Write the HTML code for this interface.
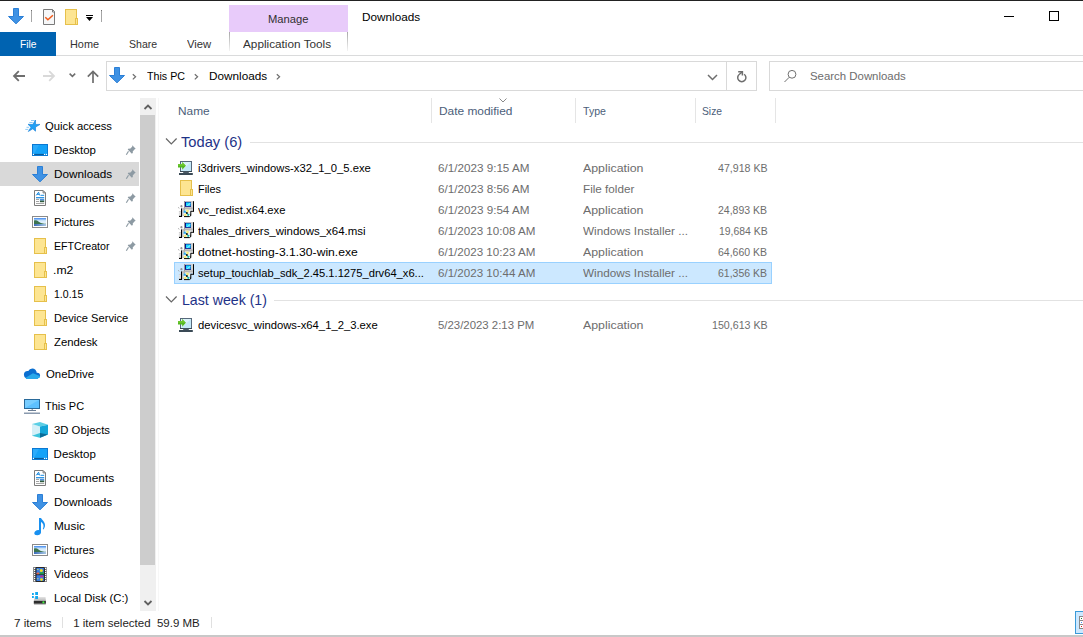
<!DOCTYPE html>
<html><head><meta charset="utf-8">
<style>
*{margin:0;padding:0;box-sizing:border-box}
html,body{width:1083px;height:637px;overflow:hidden;background:#fff}
body{position:relative;font-family:"Liberation Sans",sans-serif;font-size:12px;color:#000}
.a{position:absolute}
.t{position:absolute;white-space:nowrap;transform-origin:0 0}
</style></head><body>
<!-- top dark border -->
<div class="a" style="left:0;top:0;width:1083px;height:1px;background:#222"></div>
<!-- Manage contextual tab -->
<div class="a" style="left:229px;top:5px;width:119px;height:27px;background:#e8cbfa"></div>
<!-- ribbon -->
<div class="a" style="left:0;top:55px;width:1083px;height:1px;background:#dadbdc"></div>
<div class="a" style="left:0;top:32px;width:56px;height:24px;background:#0063b1"></div>
<div class="a" style="left:229px;top:32px;width:1px;height:19px;background:linear-gradient(#a8a8a8,#f4f4f4)"></div>
<div class="a" style="left:347px;top:32px;width:1px;height:19px;background:linear-gradient(#a8a8a8,#f4f4f4)"></div>
<!-- window controls -->
<div class="a" style="left:1004px;top:16px;width:10px;height:1px;background:#000"></div>
<div class="a" style="left:1049px;top:11px;width:10px;height:10px;border:1px solid #000"></div>
<!-- address bar -->
<div class="a" style="left:106px;top:61px;width:651px;height:30px;border:1px solid #d9d9d9"></div>
<div class="a" style="left:726px;top:61px;width:1px;height:30px;background:#d9d9d9"></div>
<!-- search box -->
<div class="a" style="left:769px;top:61px;width:320px;height:30px;border:1px solid #d9d9d9"></div>
<!-- nav selection -->
<div class="a" style="left:0;top:162px;width:139px;height:24px;background:#d9d9d9"></div>
<!-- scrollbar -->
<div class="a" style="left:140px;top:98px;width:16px;height:513px;background:#f0f0f0"></div>
<div class="a" style="left:140px;top:115px;width:15px;height:450px;background:#cdcdcd"></div>
<div class="a" style="left:158px;top:98px;width:1px;height:513px;background:#f7f7f7"></div>
<!-- column separators -->
<div class="a" style="left:431px;top:98px;width:1px;height:25px;background:#e5e5e5"></div>
<div class="a" style="left:575px;top:98px;width:1px;height:25px;background:#e5e5e5"></div>
<div class="a" style="left:695px;top:98px;width:1px;height:25px;background:#e5e5e5"></div>
<div class="a" style="left:775px;top:98px;width:1px;height:25px;background:#e5e5e5"></div>
<!-- group lines -->
<div class="a" style="left:250px;top:142px;width:833px;height:1px;background:#e2e2e2"></div>
<div class="a" style="left:274px;top:300px;width:809px;height:1px;background:#e2e2e2"></div>
<!-- selected row -->
<div class="a" style="left:174px;top:262px;width:598px;height:22px;background:#cce8ff;border:1px solid #99d1ff"></div>
<!-- status bar -->
<div class="a" style="left:62px;top:617px;width:1px;height:11px;background:#e0e0e0"></div>
<div class="a" style="left:211px;top:617px;width:1px;height:11px;background:#e0e0e0"></div>
<div class="a" style="left:1075px;top:611px;width:10px;height:23px;background:#cce8ff;border:1px solid #3a9ad9"></div>
<div class="a" style="left:0;top:635px;width:1083px;height:2px;background:#c8c8c8"></div>
<svg class="a" style="left:0;top:0" width="1083" height="637" viewBox="0 0 1083 637">
<defs>
  <symbol id="dl" overflow="visible"><path d="M5.5 0.5h5v8h5l-7.5 7.3l-7.5-7.3h5z" fill="#3f92e4" stroke="#2b7fd6" stroke-width="1"/></symbol>
  <symbol id="fold" overflow="visible"><rect x="0.5" y="0.5" width="11" height="15" fill="#fde592" stroke="#e6c04b"/><rect x="10.5" y="9.5" width="2" height="6" fill="#fde592" stroke="#e6c04b"/></symbol>
  <symbol id="pin" overflow="visible"><path d="M6.3 0.3l3.4 3.4l-1 0.6l-2 2.1l0.2 1.4l-1 1l-4.2-4.2l1-1l1.4 0.2l2.1-2z" fill="#8d9aa3"/><path d="M2.5 6.2l-2.2 3.5" stroke="#8d9aa3" stroke-width="1.2"/></symbol>
  <symbol id="desk" overflow="visible"><rect x="0.5" y="0.5" width="15" height="11" fill="#14a2f8" stroke="#0b78d2"/><path d="M1 1h6L2 10H1z" fill="#40b4ff" opacity="0.5"/><rect x="2" y="9.9" width="11" height="1.1" fill="#0a5a9a"/><circle cx="1.5" cy="10.4" r="0.65" fill="#fff"/><circle cx="12.5" cy="10.4" r="0.65" fill="#fff"/><circle cx="14.5" cy="10.4" r="0.65" fill="#fff"/></symbol>
  <symbol id="docs" overflow="visible"><path d="M0.5 0.5h8.5l2.5 2.5v12.5h-11z" fill="#fff" stroke="#7c7c7c"/><path d="M9 0.5v2.5h2.5z" fill="#c8c8c8" stroke="#7c7c7c" stroke-width="0.8"/><path d="M2.2 5.4L4.6 2.2L5.6 5.4M3 4.3h2.2" fill="none" stroke="#1a8ae0" stroke-width="1"/><rect x="6.5" y="4.8" width="3.7" height="1" fill="#1a8ae0"/><rect x="2" y="7.1" width="8.2" height="1.2" fill="#1a8ae0"/><rect x="2" y="9" width="3" height="0.9" fill="#9a9a9a"/><rect x="2" y="11.1" width="3" height="0.9" fill="#9a9a9a"/><rect x="5.9" y="8.9" width="4.3" height="1.7" fill="#4a90e0"/><rect x="5.9" y="10.6" width="4.3" height="1.6" fill="#2e5a3a"/><rect x="2" y="13" width="8.2" height="1" fill="#a8a8a8"/></symbol>
  <symbol id="pics" overflow="visible"><defs><linearGradient id="psky" x1="0" y1="0" x2="0" y2="1"><stop offset="0" stop-color="#3c86ee"/><stop offset="0.45" stop-color="#d4eafa"/><stop offset="1" stop-color="#e8f4fc"/></linearGradient><linearGradient id="pwat" x1="0" y1="0" x2="1" y2="0"><stop offset="0" stop-color="#3a6ab8"/><stop offset="1" stop-color="#a8c8e4"/></linearGradient></defs><rect x="0.5" y="0.5" width="15" height="11" fill="#fff" stroke="#8a8a8a"/><rect x="2" y="2" width="12" height="6" fill="url(#psky)"/><path d="M2 4.6c1.5-0.6 3-0.3 4.5 0.8s3 2 7.5 2.3V8.2H2z" fill="#3c7450"/><rect x="2" y="8" width="12" height="2" fill="url(#pwat)"/></symbol>
  <symbol id="exe" overflow="visible"><rect x="2.5" y="0.5" width="11" height="10" fill="#c4e8f8" stroke="#56687a"/><path d="M3 1h10L3 10z" fill="#e6f6fc" opacity="0.7"/><rect x="2" y="10" width="12" height="1" fill="#3a4a56"/><rect x="5.2" y="10.5" width="5.6" height="1.5" fill="#4a5a66"/><rect x="1" y="12" width="13.8" height="2" fill="#3a4a56"/><path d="M0 3h4.2V1l3.7 3.8l-3.7 4V6.5H0z" fill="#52b820"/><path d="M0 3h4.2V1l3.7 3.8H0z" fill="#7ed038" opacity="0.6"/></symbol>
  <symbol id="msi" overflow="visible"><rect x="6" y="0" width="9.2" height="9" fill="#d0d0d0"/><rect x="6" y="0" width="0.8" height="9" fill="#8a8a8a"/><rect x="15" y="0.2" width="1" height="10.2" fill="#000"/><rect x="7" y="0.9" width="6" height="4.9" fill="#000080"/><rect x="7.9" y="1.4" width="4.7" height="3.7" fill="#18d8ff"/><path d="M8.3 4.9L12.4 1.6v1.3L9.6 4.9z" fill="#8ae8ff"/><rect x="6.8" y="6.6" width="8" height="1.2" fill="#b0b0b0"/><path d="M12.4 9.8h3.6v0.9h-2.7v3.8l-1.2 1.2v-1z" fill="#000"/><rect x="0.9" y="10" width="2.2" height="5" fill="#d0d0d0"/><rect x="0.9" y="11.5" width="2.2" height="0.8" fill="#f4f4f4"/><rect x="0.9" y="13.5" width="2.2" height="0.8" fill="#f4f4f4"/><rect x="3" y="7.4" width="1.1" height="8.4" fill="#000"/><rect x="1" y="14.9" width="3" height="1.1" fill="#000"/><rect x="4.1" y="6.8" width="2.4" height="8.2" fill="#c0c0c0"/><circle cx="8.7" cy="12" r="3.4" fill="#eeeeee"/><path d="M8.7 12L5.3 11.6a3.4 3.4 0 0 1 1.6-2.5z" fill="#28a8e8"/><path d="M8.7 12L8.3 8.6a3.4 3.4 0 0 1 2.9 1.3z" fill="#f8f070"/><path d="M8.7 12l3 1.5a3.4 3.4 0 0 1-1.8 1.7z" fill="#10b8b0"/><path d="M8.7 12L8.1 15.4a3.4 3.4 0 0 1-2.5-1.7z" fill="#f8f070"/><rect x="8" y="11.2" width="1.7" height="1.6" fill="#000"/><rect x="6" y="15.1" width="5.8" height="1" fill="#000"/><path d="M2.2 5.2h2.4 M3.4 4v2.4" stroke="#8a8a8a" stroke-width="0.9"/><path d="M0 6.3l1.4 1" stroke="#a0a0a0" stroke-width="0.8"/></symbol>
</defs>

<!-- QAT -->
<use href="#dl" x="8" y="8"/>
<rect x="31" y="10" width="1" height="12" fill="#a6a6a6"/><rect x="31" y="10" width="1" height="1" fill="#707070"/>
<path d="M43.5 9.5h9l2 2v13h-11z" fill="#f6f7f8" stroke="#7a7a7a"/>
<path d="M52.5 9.5v2.5h2" fill="none" stroke="#7a7a7a"/>
<path d="M45.3 17.2l2.6 2.6l5-4.6" fill="none" stroke="#f05a1a" stroke-width="1.5"/>
<use href="#fold" x="65" y="9"/>
<rect x="86" y="15" width="7" height="1" fill="#000"/>
<path d="M86 17h7l-3.5 4z" fill="#000"/>
<rect x="101" y="10" width="1" height="12" fill="#a6a6a6"/><rect x="101" y="10" width="1" height="1" fill="#707070"/>

<!-- nav buttons -->
<g fill="none" stroke-width="1.5">
  <path d="M25 76H14.2 M18.8 71.2L14 76L18.8 80.8" stroke="#6e6e6e" stroke-width="1.8"/>
  <path d="M43 76H53.8 M49.2 71.2L54 76L49.2 80.8" stroke="#d9d9d9" stroke-width="1.8"/>
  <path d="M69.6 73.6L72.4 76.4L75.2 73.6" stroke="#6e6e6e"/>
  <path d="M93 83V71.5 M87.8 76.7L93 71.5L98.2 76.7" stroke="#6e6e6e" stroke-width="1.7"/>
</g>
<use href="#dl" x="109" y="67"/>
<g fill="none" stroke="#6e6e6e" stroke-width="1.2">
  <path d="M132.8 74.2L135.6 76.8L132.8 79.4"/>
  <path d="M194.8 74.2L197.6 76.8L194.8 79.4"/>
  <path d="M276.8 74.2L279.6 76.8L276.8 79.4"/>
</g>
<path d="M708 75l4.5 4.5l4.5-4.5" fill="none" stroke="#6e6e6e" stroke-width="1.5"/>
<path d="M744.15 74.24A4.1 4.1 0 1 1 739.45 74.24L742.2 71.9" fill="none" stroke="#6e6e6e" stroke-width="1.5"/>
<path d="M738.2 71.8H742.4V75.5" fill="none" stroke="#6e6e6e" stroke-width="1.5"/>
<circle cx="792" cy="74.3" r="3.9" fill="none" stroke="#707070" stroke-width="1"/>
<path d="M789.2 77.3L784.5 82" stroke="#707070" stroke-width="1"/>

<!-- scrollbar arrows -->
<path d="M144.5 109L148 105.5L151.5 109" fill="none" stroke="#606060" stroke-width="1.8"/>
<path d="M144.5 601L148 604.5L151.5 601" fill="none" stroke="#606060" stroke-width="1.8"/>

<!-- sort arrow -->
<path d="M499.5 98.5L503 102L506.5 98.5" fill="none" stroke="#8a8a8a" stroke-width="1"/>
<!-- group chevrons -->
<path d="M166 138.5L171.3 143.8L176.6 138.5" fill="none" stroke="#666" stroke-width="1.2"/>
<path d="M166 296.5L171.3 301.8L176.6 296.5" fill="none" stroke="#666" stroke-width="1.2"/>

<!-- NAV ICONS -->
<!-- star -->
<polygon points="35.5,120 35.56,124.47 40,124.4 35.56,127.11 35.5,131.2 32.8,128.79 28.3,131.5 31.03,127.16 28,124.3 32.73,124.45" fill="#20a0f4" stroke="#0b7bd6" stroke-width="0.6" stroke-linejoin="round"/>
<g stroke="#8fcaf4" stroke-width="1">
  <path d="M31 120.5h4 M29.3 122.5h3.4 M26.5 127.3h2.6 M25.3 129.4h3"/>
</g>
<use href="#desk" x="32" y="144"/>
<use href="#dl" x="32" y="166"/>
<use href="#docs" x="34" y="190"/>
<use href="#pics" x="32" y="216"/>
<use href="#fold" x="34" y="238"/>
<use href="#fold" x="34" y="262"/>
<use href="#fold" x="34" y="286"/>
<use href="#fold" x="34" y="310"/>
<use href="#fold" x="34" y="334"/>
<use href="#pin" x="126" y="145"/>
<use href="#pin" x="126" y="169"/>
<use href="#pin" x="126" y="193"/>
<use href="#pin" x="126" y="217"/>
<use href="#pin" x="126" y="241"/>
<!-- cloud -->
<clipPath id="cl"><circle cx="32.3" cy="372.8" r="4.4"/><circle cx="27.7" cy="374.8" r="3.8"/><circle cx="37.2" cy="375.6" r="2.9"/><rect x="26" y="375" width="11.5" height="4"/></clipPath>
<g clip-path="url(#cl)"><rect x="23" y="367" width="18" height="13" fill="#0b6fd0"/><path d="M22 380L33 373.2L41 376.5V380z" fill="#28a8ea"/></g>
<!-- PC -->
<rect x="24.5" y="399.5" width="15" height="9" fill="#5cc0ff" stroke="#2a6a9a"/>
<path d="M25 400h14L25 408z" fill="#8ad6ff" opacity="0.6"/>
<rect x="31.5" y="409" width="1.5" height="1" fill="#9aa8b6"/>
<rect x="28" y="410" width="8" height="1" fill="#6a7d94"/>
<rect x="24" y="412.5" width="16" height="1.5" fill="#8a9aae"/>
<!-- cube -->
<polygon points="32,424 40,426.5 40,437.8 32,435.7" fill="#d4f0f8"/>
<polygon points="32,424 40,422 48,424.8 40,426.5" fill="#5ccfe5"/>
<polygon points="40,426.5 48,424.8 48,434.6 40,437.8" fill="#14a6d8"/>
<polygon points="32,435.7 40,433 40,437.8" fill="#3dc4dc"/>
<polygon points="40,433 48,434.6 40,437.8" fill="#0b6c98"/>
<use href="#desk" x="32" y="448"/>
<use href="#docs" x="34" y="470"/>
<use href="#dl" x="32" y="494"/>
<!-- music -->
<path d="M39 518h2c0.5 1.5 4 3.5 4 7c0 2-0.7 3.5-1.6 4.4l-0.6-0.4c0.5-1 0.7-2 0.7-3c0-2-1.5-3.5-2.5-4v10.5c0 1.3-1.8 2.8-3.8 2.8s-2.9-0.8-2.9-2c0-1.8 2-3.2 3.9-3.2c0.3 0 0.6 0 0.8 0.1z" fill="#1890f0"/>
<use href="#pics" x="32" y="544"/>
<!-- videos -->
<rect x="33.5" y="567.5" width="13" height="14" fill="#5a5a5a" stroke="#8a8a8a"/>
<rect x="35.6" y="567.2" width="9" height="14.6" fill="#111"/>
<rect x="36.4" y="568" width="7.4" height="6.3" fill="#3d7ee0"/>
<rect x="36.4" y="575.2" width="7.4" height="5.8" fill="#3d7ee0"/>
<circle cx="41.3" cy="570.6" r="1.5" fill="#f4e020"/><rect x="39.5" y="572.3" width="4.3" height="2" fill="#20a040"/><rect x="36.6" y="572.6" width="2.6" height="1.7" fill="#f06040"/><rect x="37" y="569" width="1.6" height="0.8" fill="#c8e870"/>
<circle cx="41.5" cy="579.6" r="1.4" fill="#f4e020"/><rect x="40.2" y="575.6" width="3" height="1.6" fill="#c02890"/><rect x="37" y="578.4" width="1.6" height="0.8" fill="#c8e870"/>
<g fill="#fff"><rect x="34" y="568" width="1.2" height="1.1"/><rect x="34" y="570" width="1.2" height="1.1"/><rect x="34" y="572" width="1.2" height="1.1"/><rect x="34" y="574" width="1.2" height="1.1"/><rect x="34" y="576" width="1.2" height="1.1"/><rect x="34" y="578" width="1.2" height="1.1"/><rect x="34" y="580" width="1.2" height="1.1"/>
<rect x="45" y="568" width="1.2" height="1.1"/><rect x="45" y="570" width="1.2" height="1.1"/><rect x="45" y="572" width="1.2" height="1.1"/><rect x="45" y="574" width="1.2" height="1.1"/><rect x="45" y="576" width="1.2" height="1.1"/><rect x="45" y="578" width="1.2" height="1.1"/><rect x="45" y="580" width="1.2" height="1.1"/></g>
<!-- disk -->
<defs><linearGradient id="dtop" x1="0" y1="0" x2="0" y2="1"><stop offset="0" stop-color="#e4e4e4"/><stop offset="1" stop-color="#b8b8b8"/></linearGradient></defs>
<path d="M34.5 597h11l0.5 3.8h-12z" fill="url(#dtop)"/>
<rect x="33.8" y="600.8" width="12.1" height="3" fill="#2e2e2e"/>
<rect x="34" y="603.8" width="11.8" height="0.8" fill="#a0a0a0"/>
<circle cx="43.4" cy="602.3" r="1.1" fill="#40f040"/>
<g fill="#12a8f0"><rect x="32" y="593" width="1.8" height="2"/><rect x="35.2" y="592" width="2.8" height="3"/><rect x="32" y="596" width="1.8" height="2"/><rect x="35.2" y="596" width="2.8" height="3"/></g>

<!-- FILE ICONS -->
<use href="#exe" x="178" y="161"/>
<use href="#fold" x="180" y="180"/>
<use href="#msi" x="178" y="201"/>
<use href="#msi" x="178" y="222"/>
<use href="#msi" x="178" y="243"/>
<use href="#msi" x="178" y="264"/>
<use href="#exe" x="178" y="318"/>
<!-- status view button icon -->
<rect x="1079.5" y="616.5" width="6" height="12" fill="#fff" stroke="#888"/><path d="M1080 620.5h5M1080 624.5h5" stroke="#888"/><rect x="1081" y="618" width="1" height="1" fill="#2a7a3a"/><rect x="1081" y="622" width="1" height="1" fill="#4a8aff"/><rect x="1081" y="626" width="1" height="1" fill="#e02020"/>
</svg>

<div class="t" style="left:267.50px;top:14.00px;font-size:11.5px;line-height:11.5px;color:#303030;transform:scaleX(0.9738)">Manage</div>
<div class="t" style="left:361.50px;top:12.00px;font-size:11.5px;line-height:11.5px;color:#000;transform:scaleX(1.0228)">Downloads</div>
<div class="t" style="left:19.80px;top:39.00px;font-size:11.5px;line-height:11.5px;color:#fff;transform:scaleX(0.8947)">File</div>
<div class="t" style="left:70.30px;top:39.00px;font-size:11.5px;line-height:11.5px;color:#333;transform:scaleX(0.9452)">Home</div>
<div class="t" style="left:129.40px;top:39.00px;font-size:11.5px;line-height:11.5px;color:#333;transform:scaleX(0.9161)">Share</div>
<div class="t" style="left:187.30px;top:39.00px;font-size:11.5px;line-height:11.5px;color:#333;transform:scaleX(0.9800)">View</div>
<div class="t" style="left:243.20px;top:39.00px;font-size:11.5px;line-height:11.5px;color:#333;transform:scaleX(1.0233)">Application Tools</div>
<div class="t" style="left:146.50px;top:71.00px;font-size:11.5px;line-height:11.5px;color:#000;transform:scaleX(0.9293)">This PC</div>
<div class="t" style="left:208.60px;top:71.00px;font-size:11.5px;line-height:11.5px;color:#000;transform:scaleX(1.0211)">Downloads</div>
<div class="t" style="left:810.30px;top:71.00px;font-size:11.5px;line-height:11.5px;color:#6d6d6d;transform:scaleX(0.9918)">Search Downloads</div>
<div class="t" style="left:45.20px;top:121.00px;font-size:11.5px;line-height:11.5px;color:#000;transform:scaleX(0.9783)">Quick access</div>
<div class="t" style="left:53.60px;top:145.00px;font-size:11.5px;line-height:11.5px;color:#000;transform:scaleX(0.9952)">Desktop</div>
<div class="t" style="left:53.60px;top:169.00px;font-size:11.5px;line-height:11.5px;color:#000;transform:scaleX(1.0211)">Downloads</div>
<div class="t" style="left:53.60px;top:193.00px;font-size:11.5px;line-height:11.5px;color:#000;transform:scaleX(1.0379)">Documents</div>
<div class="t" style="left:53.60px;top:217.00px;font-size:11.5px;line-height:11.5px;color:#000;transform:scaleX(0.9738)">Pictures</div>
<div class="t" style="left:53.60px;top:241.00px;font-size:11.5px;line-height:11.5px;color:#000;transform:scaleX(0.9233)">EFTCreator</div>
<div class="t" style="left:52.54px;top:265.00px;font-size:11.5px;line-height:11.5px;color:#000;transform:scaleX(1.0611)">.m2</div>
<div class="t" style="left:53.60px;top:289.00px;font-size:11.5px;line-height:11.5px;color:#000;transform:scaleX(0.9156)">1.0.15</div>
<div class="t" style="left:53.60px;top:313.00px;font-size:11.5px;line-height:11.5px;color:#000;transform:scaleX(0.9675)">Device Service</div>
<div class="t" style="left:53.60px;top:337.00px;font-size:11.5px;line-height:11.5px;color:#000;transform:scaleX(0.9864)">Zendesk</div>
<div class="t" style="left:45.50px;top:369.00px;font-size:11.5px;line-height:11.5px;color:#000;transform:scaleX(0.9898)">OneDrive</div>
<div class="t" style="left:45.00px;top:401.00px;font-size:11.5px;line-height:11.5px;color:#000;transform:scaleX(0.9561)">This PC</div>
<div class="t" style="left:53.60px;top:425.00px;font-size:11.5px;line-height:11.5px;color:#000;transform:scaleX(0.9842)">3D Objects</div>
<div class="t" style="left:53.60px;top:449.00px;font-size:11.5px;line-height:11.5px;color:#000;transform:scaleX(1.0000)">Desktop</div>
<div class="t" style="left:53.60px;top:473.00px;font-size:11.5px;line-height:11.5px;color:#000;transform:scaleX(1.0345)">Documents</div>
<div class="t" style="left:53.60px;top:497.00px;font-size:11.5px;line-height:11.5px;color:#000;transform:scaleX(1.0211)">Downloads</div>
<div class="t" style="left:53.60px;top:521.00px;font-size:11.5px;line-height:11.5px;color:#000;transform:scaleX(1.0300)">Music</div>
<div class="t" style="left:53.60px;top:545.00px;font-size:11.5px;line-height:11.5px;color:#000;transform:scaleX(0.9714)">Pictures</div>
<div class="t" style="left:53.60px;top:569.00px;font-size:11.5px;line-height:11.5px;color:#000;transform:scaleX(0.9829)">Videos</div>
<div class="t" style="left:53.60px;top:593.00px;font-size:11.5px;line-height:11.5px;color:#000;transform:scaleX(0.9867)">Local Disk (C:)</div>
<div class="t" style="left:177.50px;top:106.00px;font-size:11.5px;line-height:11.5px;color:#4c607a;transform:scaleX(1.0290)">Name</div>
<div class="t" style="left:438.90px;top:106.00px;font-size:11.5px;line-height:11.5px;color:#4c607a;transform:scaleX(1.0338)">Date modified</div>
<div class="t" style="left:583.30px;top:106.00px;font-size:11.5px;line-height:11.5px;color:#4c607a;transform:scaleX(0.9200)">Type</div>
<div class="t" style="left:702.20px;top:106.00px;font-size:11.5px;line-height:11.5px;color:#4c607a;transform:scaleX(0.8955)">Size</div>
<div class="t" style="left:181.30px;top:134.00px;font-size:15px;line-height:15px;color:#1e3287;transform:scaleX(0.9790)">Today (6)</div>
<div class="t" style="left:181.50px;top:292.00px;font-size:15px;line-height:15px;color:#1e3287;transform:scaleX(0.9433)">Last week (1)</div>
<div class="t" style="left:198.30px;top:163.00px;font-size:11.5px;line-height:11.5px;color:#000;transform:scaleX(0.9795)">i3drivers_windows-x32_1_0_5.exe</div>
<div class="t" style="left:438.20px;top:163.00px;font-size:11.5px;line-height:11.5px;color:#6d6d6d;transform:scaleX(1.0144)">6/1/2023 9:15 AM</div>
<div class="t" style="left:582.50px;top:163.00px;font-size:11.5px;line-height:11.5px;color:#6d6d6d;transform:scaleX(1.0750)">Application</div>
<div class="t" style="left:717.70px;top:163.00px;font-size:11.5px;line-height:11.5px;color:#6d6d6d;transform:scaleX(0.9241)">47,918 KB</div>
<div class="t" style="left:198.30px;top:184.00px;font-size:11.5px;line-height:11.5px;color:#000;transform:scaleX(0.9458)">Files</div>
<div class="t" style="left:438.20px;top:184.00px;font-size:11.5px;line-height:11.5px;color:#6d6d6d;transform:scaleX(1.0144)">6/1/2023 8:56 AM</div>
<div class="t" style="left:582.50px;top:184.00px;font-size:11.5px;line-height:11.5px;color:#6d6d6d;transform:scaleX(1.0157)">File folder</div>
<div class="t" style="left:198.30px;top:205.00px;font-size:11.5px;line-height:11.5px;color:#000;transform:scaleX(0.9764)">vc_redist.x64.exe</div>
<div class="t" style="left:438.20px;top:205.00px;font-size:11.5px;line-height:11.5px;color:#6d6d6d;transform:scaleX(1.0144)">6/1/2023 9:54 AM</div>
<div class="t" style="left:582.50px;top:205.00px;font-size:11.5px;line-height:11.5px;color:#6d6d6d;transform:scaleX(1.0750)">Application</div>
<div class="t" style="left:718.30px;top:205.00px;font-size:11.5px;line-height:11.5px;color:#6d6d6d;transform:scaleX(0.9130)">24,893 KB</div>
<div class="t" style="left:198.30px;top:226.00px;font-size:11.5px;line-height:11.5px;color:#000;transform:scaleX(0.9970)">thales_drivers_windows_x64.msi</div>
<div class="t" style="left:438.20px;top:226.00px;font-size:11.5px;line-height:11.5px;color:#6d6d6d;transform:scaleX(1.0082)">6/1/2023 10:08 AM</div>
<div class="t" style="left:582.50px;top:226.00px;font-size:11.5px;line-height:11.5px;color:#6d6d6d;transform:scaleX(1.0206)">Windows Installer ...</div>
<div class="t" style="left:718.70px;top:226.00px;font-size:11.5px;line-height:11.5px;color:#6d6d6d;transform:scaleX(0.9056)">19,684 KB</div>
<div class="t" style="left:198.30px;top:247.00px;font-size:11.5px;line-height:11.5px;color:#000;transform:scaleX(1.0543)">dotnet-hosting-3.1.30-win.exe</div>
<div class="t" style="left:438.20px;top:247.00px;font-size:11.5px;line-height:11.5px;color:#6d6d6d;transform:scaleX(1.0082)">6/1/2023 10:23 AM</div>
<div class="t" style="left:582.50px;top:247.00px;font-size:11.5px;line-height:11.5px;color:#6d6d6d;transform:scaleX(1.0750)">Application</div>
<div class="t" style="left:718.30px;top:247.00px;font-size:11.5px;line-height:11.5px;color:#6d6d6d;transform:scaleX(0.9130)">64,660 KB</div>
<div class="t" style="left:198.30px;top:268.00px;font-size:11.5px;line-height:11.5px;color:#000;transform:scaleX(0.9707)">setup_touchlab_sdk_2.45.1.1275_drv64_x6...</div>
<div class="t" style="left:438.20px;top:268.00px;font-size:11.5px;line-height:11.5px;color:#6d6d6d;transform:scaleX(1.0082)">6/1/2023 10:44 AM</div>
<div class="t" style="left:582.50px;top:268.00px;font-size:11.5px;line-height:11.5px;color:#6d6d6d;transform:scaleX(1.0206)">Windows Installer ...</div>
<div class="t" style="left:718.30px;top:268.00px;font-size:11.5px;line-height:11.5px;color:#6d6d6d;transform:scaleX(0.9130)">61,356 KB</div>
<div class="t" style="left:198.30px;top:320.00px;font-size:11.5px;line-height:11.5px;color:#000;transform:scaleX(0.9798)">devicesvc_windows-x64_1_2_3.exe</div>
<div class="t" style="left:438.20px;top:320.00px;font-size:11.5px;line-height:11.5px;color:#6d6d6d;transform:scaleX(0.9907)">5/23/2023 2:13 PM</div>
<div class="t" style="left:582.50px;top:320.00px;font-size:11.5px;line-height:11.5px;color:#6d6d6d;transform:scaleX(1.0750)">Application</div>
<div class="t" style="left:712.00px;top:320.00px;font-size:11.5px;line-height:11.5px;color:#6d6d6d;transform:scaleX(0.9267)">150,613 KB</div>
<div class="t" style="left:14.20px;top:618.00px;font-size:11.5px;line-height:11.5px;color:#1e1e1e;transform:scaleX(1.0162)">7 items</div>
<div class="t" style="left:73.20px;top:618.00px;font-size:11.5px;line-height:11.5px;color:#1e1e1e;transform:scaleX(1.0000)">1 item selected&nbsp;&nbsp;59.9 MB</div>
</body></html>
